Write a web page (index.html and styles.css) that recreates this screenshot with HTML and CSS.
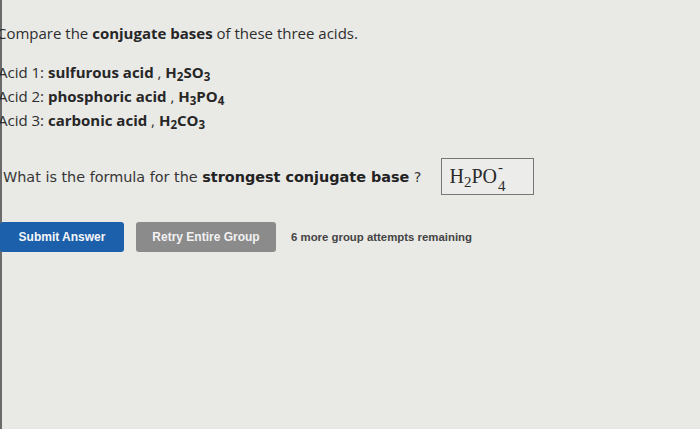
FILE: index.html
```html
<!DOCTYPE html>
<html>
<head>
<meta charset="utf-8">
<link rel="stylesheet" href="styles.css">
</head>
<body>
<div class="page">
  <p class="intro">Compare the <b>conjugate bases</b> of these three acids.</p>
  <div class="acids">
    <div class="acid">Acid 1: <b>sulfurous acid</b> , <b>H<sub>2</sub>SO<sub>3</sub></b></div>
    <div class="acid">Acid 2: <b>phosphoric acid</b> , <b>H<sub>3</sub>PO<sub>4</sub></b></div>
    <div class="acid">Acid 3: <b>carbonic acid</b> , <b>H<sub>2</sub>CO<sub>3</sub></b></div>
  </div>
  <div class="question">
    <span class="qtext">What is the formula for the <b>strongest conjugate base</b> ?</span>
    <span class="answer">H<span class="sub">2</span>PO<span class="subsup"><span class="sup">-</span><span class="sub2">4</span></span></span>
  </div>
  <div class="actions">
    <button class="btn submit">Submit Answer</button>
    <button class="btn retry">Retry Entire Group</button>
    <span class="remaining">6 more group attempts remaining</span>
  </div>
</div>
</body>
</html>
```
FILE: styles.css
```css
html, body {
  margin: 0;
  padding: 0;
}
body {
  width: 700px;
  height: 429px;
  background: #e9e9e6;
  overflow: hidden;
}
.page {
  height: 429px;
  border-left: 2px solid #6a6a6a;
  box-sizing: border-box;
  padding-top: 22px;
  font-family: "Open Sans", "DejaVu Sans", sans-serif;
  color: #2e2e2e;
}
.intro {
  margin: 0 0 0 -5px;
  font-size: 15px;
  line-height: 23px;
}
.intro b, .acid b {
  font-weight: 700;
  color: #262626;
}
.acids {
  margin: 15px 0 0 -4px;
  display: flex;
  flex-direction: column;
}
.acid {
  font-size: 15px;
  line-height: 24px;
  height: 24px;
}
.acid sub {
  font-size: 11.5px;
  line-height: 0;
  vertical-align: -3px;
}
.question {
  margin: 26px 0 0 1px;
  display: flex;
  align-items: center;
  gap: 19px;
}
.qtext {
  font-family: "DejaVu Sans", Verdana, sans-serif;
  font-size: 14.4px;
  color: #363636;
}
.qtext b {
  color: #222;
}
.answer {
  width: 93px;
  height: 37px;
  box-sizing: border-box;
  border: 1px solid #777;
  background: #ececea;
  font-family: "Liberation Serif", "Times New Roman", serif;
  font-size: 20px;
  color: #2a2a2a;
  display: flex;
  align-items: center;
  padding-left: 8px;
}
.answer .sub {
  font-size: 15px;
  position: relative;
  top: 6px;
}
.subsup {
  display: inline-flex;
  flex-direction: column;
  font-size: 15px;
  line-height: 11px;
  margin-left: 1px;
}
.subsup .sup {
  position: relative;
  top: -4px;
}
.subsup .sub2 {
  position: relative;
  top: 4px;
}
.actions {
  margin: 27px 0 0 -2px;
  display: flex;
  align-items: center;
}
.btn {
  font-family: "Liberation Sans", Arial, sans-serif;
  font-weight: 700;
  font-size: 12px;
  border: none;
  border-radius: 3px;
  height: 30px;
  padding: 0;
  cursor: pointer;
}
.submit {
  width: 124px;
  background: #1c5fab;
  color: #f4f6f8;
}
.retry {
  width: 140px;
  margin-left: 12px;
  background: #8b8b8b;
  color: #f2f2f2;
}
.remaining {
  margin-left: 15px;
  font-family: "Liberation Sans", Arial, sans-serif;
  font-weight: 700;
  font-size: 11.4px;
  color: #444;
}
```
